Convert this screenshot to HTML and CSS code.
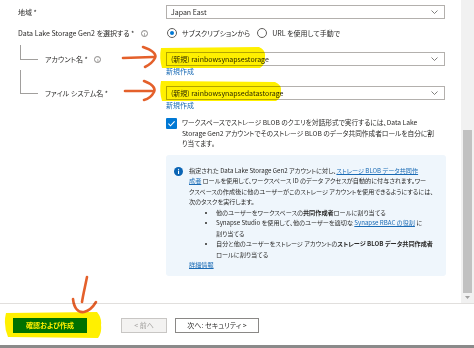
FILE: index.html
```html
<!DOCTYPE html>
<html lang="ja">
<head>
<meta charset="utf-8">
<title>Synapse</title>
<link rel="stylesheet" href="styles.css">
</head>
<body>
<div class="page">
  <div class="main">
    <div class="content">
      <div class="row r-region">
        <div class="label">地域 *</div>
        <div class="field">
          <div class="select"><span>Japan East</span><svg class="chev" width="7" height="4" viewBox="0 0 7 4"><path d="M0.5 0.5 L3.5 3.5 L6.5 0.5" fill="none" stroke="#605e5c" stroke-width="0.8"/></svg></div>
        </div>
      </div>
      <div class="row r-source">
        <div class="label">Data Lake Storage Gen2 を選択する * <span class="qi">i</span></div>
        <div class="field radios">
          <span class="radio on"><span class="dot"></span>サブスクリプションから</span>
          <span class="radio"><span class="dot"></span>URL を使用して手動で</span>
        </div>
      </div>
      <div class="row r-account">
        <div class="label sub sub-a">アカウント名 * <span class="qi">i</span></div>
        <div class="field">
          <div class="select"><span>(新規) rainbowsynapsestorage</span><svg class="chev" width="7" height="4" viewBox="0 0 7 4"><path d="M0.5 0.5 L3.5 3.5 L6.5 0.5" fill="none" stroke="#605e5c" stroke-width="0.8"/></svg></div>
          <a class="link new">新規作成</a>
        </div>
      </div>
      <div class="row r-fs">
        <div class="label sub sub-b">ファイル システム名 *</div>
        <div class="field">
          <div class="select"><span>(新規) rainbowsynapsedatastorage</span><svg class="chev" width="7" height="4" viewBox="0 0 7 4"><path d="M0.5 0.5 L3.5 3.5 L6.5 0.5" fill="none" stroke="#605e5c" stroke-width="0.8"/></svg></div>
          <a class="link new">新規作成</a>
        </div>
      </div>
      <div class="row r-check">
        <div class="label"></div>
        <div class="field check">
          <span class="box"><svg width="11" height="11" viewBox="0 0 11 11"><path d="M2.4 5.7 L4.5 7.8 L8.6 3.3" fill="none" stroke="#fff" stroke-width="1.1"/></svg></span>
          <p class="check-text">ワークスペースでストレージ BLOB のクエリを対話形式で実行するには、Data Lake<br>Storage Gen2 アカウントでそのストレージ BLOB のデータ共同作成者ロールを自分に割<br>り当てます。</p>
        </div>
      </div>
      <div class="row r-info">
        <div class="label"></div>
        <div class="field">
          <div class="infobox">
            <svg class="info-ic" width="9" height="9" viewBox="0 0 9 9"><circle cx="4.5" cy="4.5" r="4.5" fill="#0a64b4"/><rect x="4" y="3.6" width="1.1" height="3.4" fill="#fff"/><circle cx="4.55" cy="2.3" r="0.65" fill="#fff"/></svg>
            <div class="info-body">
              <p>指定された Data Lake Storage Gen2 アカウントに対し、<a class="link u">ストレージ BLOB データ共同作<br>成者</a> ロールを使用して、ワークスペース ID のデータ アクセスが自動的に付与されます。ワー<br>クスペースの作成後に他のユーザーがこのストレージ アカウントを使用できるようにするには、<br>次のタスクを実行します。</p>
              <ul>
                <li>他のユーザーをワークスペースの<b>共同作成者</b>ロールに割り当てる</li>
                <li>Synapse Studio を使用して、他のユーザーを適切な <a class="link u">Synapse RBAC の役割</a> に<br>割り当てる</li>
                <li>自分と他のユーザーをストレージ アカウントの<b>ストレージ BLOB データ共同作成者</b><br>ロールに割り当てる</li>
              </ul>
              <a class="link u more">詳細情報</a>
            </div>
          </div>
        </div>
      </div>
    </div>
    <div class="scrollbar">
      <div class="thumb"></div>
      <svg class="sb-arrow" width="5" height="3" viewBox="0 0 5 3"><path d="M0 0 L5 0 L2.5 3 Z" fill="#a0a0a0"/></svg>
    </div>
  </div>
  <div class="footer">
    <button class="btn primary">確認および作成</button>
    <button class="btn prev">&lt; 前へ</button>
    <button class="btn next">次へ: セキュリティ &gt;</button>
  </div>
  <div class="strip"></div>
</div>
<svg class="marks" width="474" height="348" viewBox="0 0 474 348">
  <path d="M161,48 L259,47 Q266,50 265,57 Q266,64 260,68 L162,68 Q159,58 161,48 Z" fill="#fff000"/>
  <path d="M161,81 L275,82 Q282,85 281,91 Q282,98 276,101 L162,101 Q159,91 161,81 Z" fill="#fff000"/>
  <path d="M6,313 L97,312 Q102,318 101,325 Q102,333 98,338 L8,337 Q3,325 6,313 Z" fill="#fff000"/>
  <g fill="none" stroke="#e4602b" stroke-width="2.6" stroke-linecap="round" stroke-linejoin="round">
    <path d="M123,58 L153,57"/>
    <path d="M143,47 C152,50 157,54 155,58 C153,62 149,65 145,67"/>
    <path d="M125,91 L152,91"/>
    <path d="M144,81 C152,84 156,88 154,92 C152,96 148,99 144,100"/>
    <path d="M87,277 C85,287 83,295 82,302"/>
    <path d="M73,299 C74,308 78,313 84,312 C89,311 93,307 96,302"/>
  </g>
</svg>
</body>
</html>
```

FILE: styles.css
```css
* { box-sizing: border-box; }
html, body {
  margin: 0;
  padding: 0;
  width: 474px;
  height: 348px;
  overflow: hidden;
  background: #fff;
}
body {
  font-family: "Noto Sans CJK JP", sans-serif;
  font-size: 7px;
  font-feature-settings: "palt" 1;
  color: #2b2a29;
  position: relative;
}
p { margin: 0; }
.page {
  display: flex;
  flex-direction: column;
  height: 348px;
}
.main {
  height: 303px;
  display: flex;
}
.content {
  flex: 1;
  padding-top: 5px;
}
.row {
  display: flex;
}
.label {
  width: 166px;
  flex-shrink: 0;
  padding-left: 18px;
  line-height: 14px;
  white-space: nowrap;
  position: relative;
}
.field {
  width: 280px;
}
.select {
  height: 14px;
  width: 279px;
  border: 1px solid #b3b0ad;
  display: flex;
  align-items: center;
  justify-content: space-between;
  padding: 0 6px 0 4px;
  background: #fff;
  line-height: 12px;
}
.chev { display: block; }
.qi {
  display: inline-block;
  width: 7px;
  height: 7px;
  border: 0.7px solid #8a8886;
  border-radius: 50%;
  font-size: 5px;
  line-height: 6px;
  text-align: center;
  color: #605e5c;
  margin-left: 5px;
  vertical-align: middle;
  position: relative;
  top: -1px;
}
.r-source { margin-top: 8px; }
.r-source .label { line-height: 12px; }
.radios {
  display: flex;
  align-items: center;
  height: 12px;
  line-height: 12px;
}
.radio {
  display: flex;
  align-items: center;
  white-space: nowrap;
}
.radio + .radio { margin-left: 6px; }
.dot {
  width: 10px;
  height: 10px;
  border: 1px solid #605e5c;
  border-radius: 50%;
  margin: 0 5px 0 1px;
  display: flex;
  align-items: center;
  justify-content: center;
}
.radio.on .dot::after {
  content: "";
  width: 4px;
  height: 4px;
  border-radius: 50%;
  background: #0078d4;
}
.r-account { margin-top: 13px; }
.r-fs { margin-top: 10px; }
.link {
  color: #1a6bb5;
  cursor: pointer;
}
.link.u { text-decoration: underline; }
.new {
  display: block;
  line-height: 10px;
  height: 10px;
}
.sub { padding-left: 45px; }
.sub::before {
  content: "";
  position: absolute;
  left: 20px;
  width: 17px;
  border-left: 1px solid #a19f9d;
  border-bottom: 1px solid #a19f9d;
}
.sub-a::before { top: -7px; height: 14px; }
.sub-b::before { top: -16px; height: 23px; }
.r-check { margin-top: 7px; }
.check {
  display: flex;
  align-items: flex-start;
}
.box {
  width: 11px;
  height: 11px;
  background: #0078d4;
  border-radius: 1px;
  margin-top: 1px;
  margin-right: 5px;
  flex-shrink: 0;
}
.box svg { display: block; }
.check-text {
  font-size: 6.7px;
  line-height: 10.5px;
  white-space: nowrap;
}
.r-info { margin-top: 6px; }
.infobox {
  width: 280px;
  background: #eff6fc;
  border-radius: 3px;
  padding: 11px 6px 5px 8px;
  display: flex;
  align-items: flex-start;
}
.info-ic {
  flex-shrink: 0;
  margin-top: 1px;
  margin-right: 6px;
}
.info-body {
  font-size: 6.15px;
  line-height: 10.5px;
  white-space: nowrap;
}
.info-body ul {
  margin: 0;
  padding-left: 27px;
  list-style: disc outside;
}
.info-body b { font-weight: 700; }
.more {
  display: block;
  margin-top: 0;
}
.scrollbar {
  width: 13px;
  background: #f1f1f1;
  display: flex;
  flex-direction: column;
  align-items: center;
  padding-top: 130px;
}
.thumb {
  width: 9px;
  height: 163px;
  background: #c1c1c1;
}
.sb-arrow {
  display: block;
  margin-top: 3px;
}
.footer {
  height: 42px;
  border-top: 1px solid #e1dfdd;
  display: flex;
  align-items: flex-start;
  padding: 14px 0 0 13px;
}
.btn {
  font-family: "Noto Sans CJK JP", sans-serif;
  font-size: 7px;
  font-feature-settings: "palt" 1;
  height: 15px;
  line-height: 13px;
  padding: 0;
  border: 1px solid transparent;
  border-radius: 0;
  background: #fff;
  color: #2b2a29;
  white-space: nowrap;
}
.primary {
  width: 74px;
  background: #0078d4;
  border-color: #0078d4;
  color: #fff;
  font-weight: 700;
}
.prev {
  width: 46px;
  margin-left: 34px;
  background: #f3f2f1;
  border-color: #c8c6c4;
  color: #a19f9d;
}
.next {
  width: 84px;
  margin-left: 8px;
  border-color: #8a8886;
}
.strip {
  height: 3px;
  background: #8a8a8a;
}
.marks {
  position: absolute;
  top: 0;
  left: 0;
  mix-blend-mode: multiply;
  pointer-events: none;
}
```
